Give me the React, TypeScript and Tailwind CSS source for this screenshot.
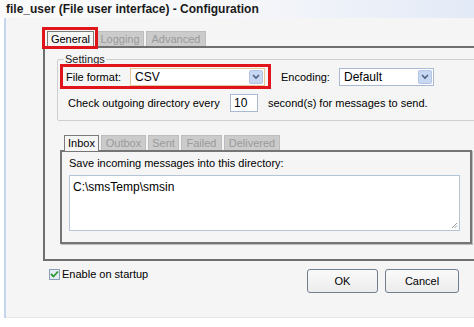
import React from "react";

function Chevron() {
  return (
    <span className="flex items-center justify-center w-[14px] h-[14px] bg-[#c9d8f2] border border-[#b3c6e6] rounded-[2px]">
      <svg width="8" height="6" viewBox="0 0 8 6">
        <path d="M1 1 L4 4 L7 1" fill="none" stroke="#4d6185" strokeWidth="1.6" />
      </svg>
    </span>
  );
}

function Select({ value, width, focus }: { value: string; width: string; focus?: boolean }) {
  return (
    <div
      className={`${width} h-[18px] bg-white border ${focus ? "border-[#e6c79a]" : "border-[#a9b9d2]"} flex items-center justify-between pl-[4px] pr-[1px]`}
    >
      <span className="text-[12px] text-black">{value}</span>
      <Chevron />
    </div>
  );
}

function Tab({ label, active, w }: { label: string; active?: boolean; w: string }) {
  return (
    <div
      className={`${w} h-[15px] flex items-center justify-center border-t border-l border-r ${
        active
          ? "bg-[#f5f5f5] border-[#7a7a7a] text-black relative z-10 -mb-px h-[16px]"
          : "bg-[#cbcbcb] border-[#bdbdbd] text-[#9a9a9a]"
      }`}
    >
      {label}
    </div>
  );
}

export default function App() {
  return (
    <div
      className="w-[474px] h-[327px] overflow-hidden bg-white text-[11px] text-black flex flex-col"
      style={{ fontFamily: '"Liberation Sans", Arial, sans-serif' }}
    >
      {/* TITLE */}
      <div className="h-[18px] shrink-0 pl-[6px] flex items-center font-bold text-[12px] text-[#1a1a1a] bg-gradient-to-r from-[#fbfbfb] via-[#f6f7fa] to-[#e3eaf7]">
        file_user (File user interface) - Configuration
      </div>

      <div className="flex h-[300px]">
        <div className="w-[4px] bg-white" />
        <div className="w-[2px] bg-[#c6d5ee]" />

        <div className="flex-1 bg-[#f5f5f5] border-b border-[#e6e6e6] flex flex-col">
          {/* OUTER TABS + PANEL */}
          <div className="ml-[37px] mt-[13px]">
            <div className="flex gap-[2px] pl-[4px] items-end relative">
              <div className="relative">
                <Tab label="General" active w="w-[47px]" />
                <div className="absolute -left-[5px] -top-[4px] w-[56px] h-[22px] border-[3px] border-[#e0141b] z-20 pointer-events-none" />
              </div>
              <Tab label="Logging" w="w-[48px]" />
              <Tab label="Advanced" w="w-[60px]" />
            </div>

            <div className="h-[215px] border-t-2 border-l-2 border-b-2 border-[#6f6f6f] pl-[12px] pt-[4px]">
              {/* SETTINGS GROUP */}
              <div className="relative border border-[#cfcfcf] rounded-[2px] h-[62px] mt-[7px] -mr-[10px]">
                <span className="absolute left-[6px] -top-[7px] px-[1px] bg-[#f5f5f5] leading-[12px] text-[#222]">
                  Settings
                </span>

                <div className="flex items-center mt-[8px] ml-[8px]">
                  <div className="relative flex items-center h-[18px] w-[199px]">
                    <span className="w-[64px]">File format:</span>
                    <Select value="CSV" width="w-[135px]" focus />
                    <div className="absolute -left-[6px] -top-[4px] w-[211px] h-[25px] border-[3px] border-[#e0141b] pointer-events-none" />
                  </div>
                  <span className="ml-[16px] w-[58px]">Encoding:</span>
                  <Select value="Default" width="w-[95px]" />
                </div>

                <div className="flex items-center mt-[8px] ml-[10px]">
                  <span className="w-[162px]">Check outgoing directory every</span>
                  <div className="w-[28px] h-[18px] bg-white border border-[#a9b9d2] pl-[3px] text-[12px] leading-[16px]">
                    10
                  </div>
                  <span className="ml-[10px]">second(s) for messages to send.</span>
                </div>
              </div>

              {/* INNER TABS */}
              <div className="mt-[14px] ml-[3px] mr-[2px]">
                <div className="flex gap-[2px] pl-[4px] items-end">
                  <Tab label="Inbox" active w="w-[35px]" />
                  <Tab label="Outbox" w="w-[45px]" />
                  <Tab label="Sent" w="w-[31px]" />
                  <Tab label="Failed" w="w-[41px]" />
                  <Tab label="Delivered" w="w-[56px]" />
                </div>
                <div className="h-[94px] border-2 border-[#757575] shadow-[1px_1px_0_#bdbdbd] pl-[7px] pr-[10px] pt-[5px]">
                  <div className="leading-[13px]">Save incoming messages into this directory:</div>
                  <div className="relative mt-[5px] h-[56px] bg-white border border-[#b4c6d6] pl-[3px] pt-[2px] text-[12px]">
                    C:\smsTemp\smsin
                    <svg className="absolute right-[1px] bottom-[1px]" width="7" height="7" viewBox="0 0 7 7">
                      <path d="M6 1 L1 6 M6 3.5 L3.5 6" stroke="#9a9a9a" strokeWidth="1" />
                    </svg>
                  </div>
                </div>
              </div>
            </div>
          </div>

          {/* BOTTOM ROW */}
          <div className="flex items-start mt-[4px] ml-[43px]">
            <div className="flex items-center gap-[2px] mt-[1px]">
              <span className="w-[11px] h-[11px] bg-[#e3ebf3] border border-[#8aa0b8] flex items-center justify-center">
                <svg width="9" height="8" viewBox="0 0 9 8">
                  <path d="M1 4 L3.5 6.5 L8 1.5" fill="none" stroke="#2e9a2e" strokeWidth="1.8" />
                </svg>
              </span>
              <span className="text-[11px]">Enable on startup</span>
            </div>
            <div className="ml-auto mr-[15px] mt-[4px] flex gap-[7px]">
              <button className="w-[71px] h-[24px] rounded-[3px] border border-[#6f7f8f] bg-gradient-to-b from-[#fafafa] to-[#ececec] text-[11px]">
                OK
              </button>
              <button className="w-[74px] h-[24px] rounded-[3px] border border-[#6f7f8f] bg-gradient-to-b from-[#fafafa] to-[#ececec] text-[11px]">
                Cancel
              </button>
            </div>
          </div>
        </div>
      </div>
    </div>
  );
}
